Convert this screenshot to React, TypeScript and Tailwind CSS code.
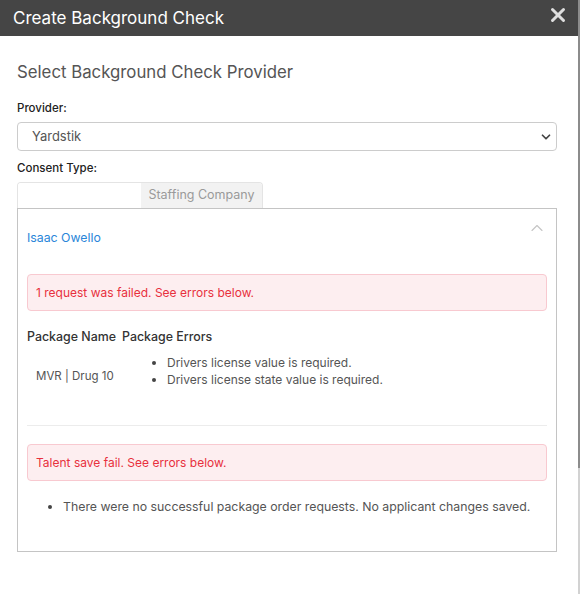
import { X, ChevronDown, ChevronUp } from 'lucide-react';

const font = { fontFamily: 'Inter, "Liberation Sans", sans-serif' };

function Alert({ text }: { text: string }) {
  return (
    <div className="rounded border border-[#f8c9d0] bg-[#fdeef0] px-[8px] py-[9px] text-[12px] leading-[17px] text-[#e8303d]">
      {text}
    </div>
  );
}

export default function App() {
  return (
    <div className="flex h-[594px] w-[580px] bg-white" style={font}>
      <div className="flex w-[578px] flex-col">
        <div className="flex h-9 justify-between bg-[#454545] pl-[13px] pr-[9px]">
          <h1 className="self-center text-[17px] leading-[24px] text-white">Create Background Check</h1>
          <X size={22} strokeWidth={3.2} className="mt-[4px] text-[#dedede]" />
        </div>

        <div className="px-[17px] pt-[24px]">
          <h2 className="text-[16.8px] leading-[24px] text-[#555]">Select Background Check Provider</h2>

          <label className="mt-[16px] block text-[11.5px] font-medium leading-[16px] text-[#222]">Provider:</label>
          <div className="mt-[6px] flex h-[29px] w-[540px] items-center justify-between rounded border border-[#cccccc] pl-[14px] pr-[3px] text-[13px] text-[#555]">
            <span>Yardstik</span>
            <ChevronDown size={14} strokeWidth={3} className="text-[#444]" />
          </div>

          <label className="mt-[9px] block text-[11.5px] font-medium leading-[16px] text-[#222]">Consent Type:</label>
          <div className="mt-[6px] flex h-[26px] w-[246px] overflow-hidden rounded-t border border-b-0 border-[#e4e4e4]">
            <div className="w-[123px] bg-white" />
            <div className="flex flex-1 items-center justify-center bg-[#f2f2f2] text-[12.5px] text-[#9a9a9a]">
              Staffing Company
            </div>
          </div>

          <div className="w-[540px] border border-[#c4c4c4] px-[9px] pb-[36px]">
            <div className="flex items-start justify-between pt-[9px]">
              <span className="pt-[12px] text-[12.3px] leading-[16px] text-[#2a86d9]">Isaac Owello</span>
              <ChevronUp size={20} strokeWidth={1.4} className="text-[#c6c6c6]" />
            </div>

            <div className="mt-[28px]">
              <Alert text="1 request was failed. See errors below." />
            </div>

            <table className="mt-[18px] border-collapse text-[12px]">
              <thead>
                <tr className="text-left leading-[16px] text-[#333]">
                  <th className="pr-[6px] text-[12.4px] font-medium">Package Name</th>
                  <th className="text-[12.4px] font-medium">Package Errors</th>
                </tr>
              </thead>
              <tbody className="text-[#555]">
                <tr>
                  <td className="pl-[9px] pt-[23px] align-top text-[11.5px] leading-[16px]">MVR | Drug 10</td>
                  <td className="pt-[9px] align-top">
                    <ul className="list-disc pl-[45px] leading-[17px] marker:text-[#444]">
                      <li>Drivers license value is required.</li>
                      <li>Drivers license state value is required.</li>
                    </ul>
                  </td>
                </tr>
              </tbody>
            </table>

            <div className="mt-[37px] border-t border-[#ececec]" />

            <div className="mt-[18px]">
              <Alert text="Talent save fail. See errors below." />
            </div>

            <ul className="mt-[18px] list-disc pl-[36px] text-[12.3px] leading-[16px] text-[#555] marker:text-[#444]">
              <li>There were no successful package order requests. No applicant changes saved.</li>
            </ul>
          </div>
        </div>
      </div>
      <div className="flex w-[2px] flex-col">
        <div className="h-[468px] bg-[#8c8c8c]" />
        <div className="flex-1 bg-[#d2d2d2]" />
      </div>
    </div>
  );
}
